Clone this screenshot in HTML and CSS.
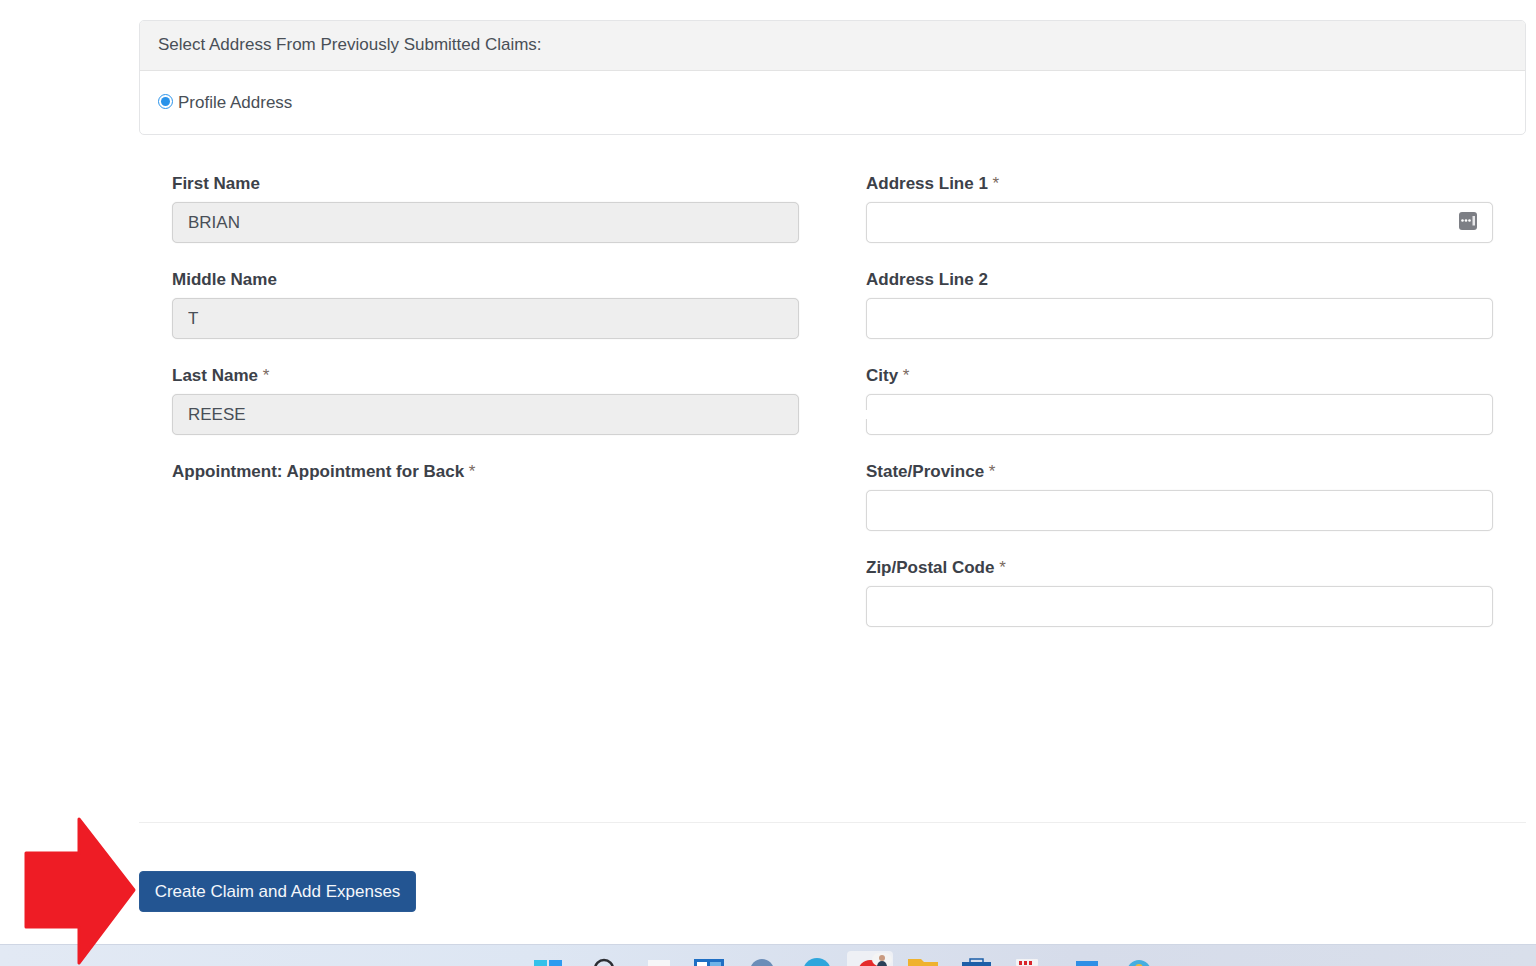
FILE: index.html
```html
<!DOCTYPE html>
<html lang="en">
<head>
<meta charset="utf-8">
<title>Create Claim</title>
<link rel="stylesheet" href="styles.css">
</head>
<body>
<div class="page">
  <main class="content">
    <section class="panel">
      <header class="panel-head">Select Address From Previously Submitted Claims:</header>
      <div class="panel-body">
        <label class="radio-row"><input class="radio" type="radio" name="address" checked> Profile Address</label>
      </div>
    </section>

    <form class="form">
      <div class="col">
        <div class="field">
          <div class="label">First Name</div>
          <div class="control"><input class="input" type="text" value="BRIAN" disabled></div>
        </div>
        <div class="field">
          <div class="label">Middle Name</div>
          <div class="control"><input class="input" type="text" value="T" disabled></div>
        </div>
        <div class="field">
          <div class="label">Last Name <span class="req">*</span></div>
          <div class="control"><input class="input" type="text" value="REESE" disabled></div>
        </div>
        <div class="field">
          <div class="label">Appointment: Appointment for Back <span class="req">*</span></div>
        </div>
      </div>
      <div class="col">
        <div class="field">
          <div class="label">Address Line 1 <span class="req">*</span></div>
          <div class="control">
            <input class="input" type="text">
            <svg class="autofill" width="18" height="18" viewBox="0 0 18 18" aria-hidden="true">
              <rect width="18" height="18" rx="3" fill="#7d7f85"/>
              <circle cx="3.5" cy="8.5" r="1.3" fill="#fff"/>
              <circle cx="7" cy="8.5" r="1.3" fill="#fff"/>
              <circle cx="10.5" cy="8.5" r="1.3" fill="#fff"/>
              <rect x="13.5" y="4" width="2.5" height="9.5" fill="#e8e8ea"/>
            </svg>
          </div>
        </div>
        <div class="field">
          <div class="label">Address Line 2</div>
          <div class="control"><input class="input" type="text"></div>
        </div>
        <div class="field">
          <div class="label">City <span class="req">*</span></div>
          <div class="control control-notch"><input class="input" type="text"></div>
        </div>
        <div class="field">
          <div class="label">State/Province <span class="req">*</span></div>
          <div class="control"><input class="input" type="text"></div>
        </div>
        <div class="field">
          <div class="label">Zip/Postal Code <span class="req">*</span></div>
          <div class="control"><input class="input" type="text"></div>
        </div>
      </div>
    </form>

    <div class="footer">
      <button class="btn" type="button">Create Claim and Add Expenses</button>
    </div>
  </main>

  <svg class="arrow" width="116" height="150" viewBox="0 0 116 150" aria-hidden="true">
    <path d="M2 36 H55 V2 L110 73 L55 146 V110 H2 Z" fill="#ee1c25" stroke="#ee1c25" stroke-width="3" stroke-linejoin="round"/>
  </svg>

  <footer class="taskbar">
    <svg class="taskbar-icons" width="1536" height="22" viewBox="0 0 1536 22" aria-hidden="true">
      <rect x="534" y="16" width="13" height="6" fill="#35c1ea"/>
      <rect x="549" y="16" width="13" height="6" fill="#2e9bf0"/>
      <circle cx="604" cy="25" r="9" fill="none" stroke="#2c2e33" stroke-width="2.5"/>
      <rect x="648" y="16" width="22" height="6" fill="#f6f6f8"/>
      <rect x="694" y="15" width="30" height="7" fill="#1f6fc4"/>
      <rect x="697" y="18" width="10" height="4" fill="#fff"/>
      <rect x="710" y="18" width="11" height="4" fill="#6fb3e8"/>
      <circle cx="762" cy="27" r="12" fill="#6b8db8"/>
      <circle cx="817" cy="28" r="14" fill="#2fa6dc"/>
      <path d="M847 22 V11 Q847 7 851 7 H889 Q893 7 893 11 V22 Z" fill="#eef0f5"/>
      <circle cx="870" cy="28" r="12" fill="#e52b2b"/>
      <rect x="872" y="9" width="20" height="13" rx="7" fill="#f4f4f4"/>
      <circle cx="882" cy="14" r="3" fill="#c99a80"/>
      <path d="M877 22 Q878 17 882 17 Q886 17 887 22 Z" fill="#2a4058"/>
      <path d="M908 22 V15 H921 L924 18 H938 V22 Z" fill="#efb22f"/>
      <rect x="962" y="18" width="29" height="4" fill="#1d5fa8"/>
      <rect x="970" y="15" width="13" height="4" fill="none" stroke="#1d5fa8" stroke-width="1.5"/>
      <rect x="1016" y="15" width="22" height="7" rx="1" fill="#f3f3f5"/>
      <rect x="1019" y="17" width="3" height="4" fill="#d9262c"/>
      <rect x="1024" y="17" width="3" height="4" fill="#d9262c"/>
      <rect x="1029" y="17" width="3" height="4" fill="#d9262c"/>
      <rect x="1076" y="17" width="22" height="5" fill="#2f8fe6"/>
      <circle cx="1139" cy="28" r="12" fill="#45aee0"/>
      <circle cx="1139" cy="24" r="4" fill="#f0b93a"/>
    </svg>
  </footer>
</div>
</body>
</html>
```

FILE: styles.css
```css
* {
  box-sizing: border-box;
}

html,
body {
  margin: 0;
  padding: 0;
  background: #fff;
}

body {
  font-family: "Liberation Sans", Arial, sans-serif;
  font-size: 17px;
  color: #494f57;
}

.page {
  position: relative;
  display: flex;
  flex-direction: column;
  width: 1536px;
  height: 966px;
  overflow: hidden;
}

.content {
  flex: 1;
  display: flex;
  flex-direction: column;
  padding: 20px 10px 0 139px;
}

.panel {
  height: 115px;
  border: 1px solid #e4e5e7;
  border-radius: 5px;
  overflow: hidden;
}

.panel-head {
  height: 50px;
  padding: 0 18px 2px;
  display: flex;
  align-items: center;
  background: #f3f3f3;
  border-bottom: 1px solid #e3e3e3;
}

.panel-body {
  padding: 20px 18px 0;
}

.radio-row {
  display: flex;
  align-items: center;
  gap: 5px;
  line-height: 24px;
}

.radio {
  width: 15px;
  height: 15px;
  margin: -4px 0 0;
  accent-color: #2a93ea;
}

.form {
  display: grid;
  grid-template-columns: 627px 627px;
  column-gap: 67px;
  padding: 37px 0 0 33px;
  height: 688px;
  border-bottom: 1px solid #eeeeee;
}

.field {
  height: 96px;
}

.label {
  height: 24px;
  margin-bottom: 6px;
  line-height: 24px;
  font-weight: 700;
  color: #3c4149;
}

.req {
  font-weight: 400;
  color: #7a6a60;
}

.control {
  position: relative;
  height: 41.3px;
}

.input {
  display: block;
  width: 100%;
  height: 100%;
  padding: 0 15px;
  border: 1px solid #d8d8d8;
  border-radius: 5px;
  background: #fff;
  box-shadow: 0 0 1px #d8d8d8;
  font: inherit;
  color: #494f57;
  outline: none;
}

.input:disabled {
  background: #eeeeee;
  border-color: #d2d2d2;
  color: #494f57;
  opacity: 1;
}

.autofill {
  position: absolute;
  top: 10px;
  right: 16px;
}

.control-notch::before {
  content: "";
  position: absolute;
  top: 16px;
  left: -1px;
  width: 3px;
  height: 9px;
  background: #fff;
}

.footer {
  padding-top: 48px;
}

.btn {
  display: block;
  width: 277px;
  height: 41px;
  padding: 0;
  border: 1px solid #2a5b96;
  border-radius: 4px;
  background: #235592;
  color: #f4f7fb;
  font: inherit;
  cursor: pointer;
}

.arrow {
  position: absolute;
  left: 24px;
  top: 817px;
}

.taskbar {
  flex: none;
  height: 22px;
  border-top: 1px solid #cfd6e4;
  background: linear-gradient(90deg, #e2e9f4 0%, #dde6f3 35%, #d6dcea 70%, #d9dfeb 100%);
}

.taskbar-icons {
  display: block;
  margin-top: -1px;
}
```
